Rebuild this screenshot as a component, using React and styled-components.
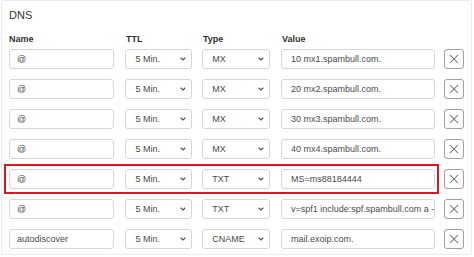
import React from 'react'
import styled, { createGlobalStyle } from 'styled-components'

const Global = createGlobalStyle`
  html, body {
    margin: 0;
    padding: 0;
    background: #fff;
  }
  body {
    font-family: "Liberation Sans", Arial, sans-serif;
  }
`

const Card = styled.div`
  width: 471px;
  height: 255px;
  box-sizing: border-box;
  margin-left: 1px;
  border: 1px solid #ececec;
  border-radius: 2px;
  padding: 8px 7px 0 7px;
`

const Title = styled.div`
  font-size: 11px;
  line-height: 13px;
  color: #333;
`

const Grid = styled.div`
  display: flex;
  flex-direction: column;
  gap: 10px;
  margin-top: 12px;
`

const HeadRow = styled.div`
  display: flex;
  font-size: 9px;
  line-height: 11px;
  font-weight: bold;
  color: #333;
  margin-bottom: -6px;
`

const Head = styled.div`
  width: ${p => p.$w}px;
  margin-right: ${p => p.$gap || 0}px;
`

const Row = styled.div`
  position: relative;
  display: flex;
  height: 20px;

  ${p => p.$highlight && `
    &::before {
      content: '';
      position: absolute;
      left: -5px;
      top: -5px;
      bottom: -5px;
      right: 25px;
      border: 2px solid #e0141c;
      pointer-events: none;
    }
  `}
`

const Field = styled.div`
  box-sizing: border-box;
  width: ${p => p.$w}px;
  margin-right: ${p => p.$gap || 0}px;
  height: 20px;
  border: 1px solid #d6d6d6;
  border-radius: 3px;
  background: #fff;
  display: flex;
  align-items: center;
  justify-content: space-between;
  padding: 0 5px 0 ${p => p.$pad || 9}px;
  font-size: 9px;
  color: #4a4a4a;
  white-space: nowrap;
  overflow: hidden;
`

const DelButton = styled.div`
  box-sizing: border-box;
  width: 20px;
  height: 20px;
  border: 1px solid #a0a0a0;
  border-radius: 3px;
  display: flex;
  align-items: center;
  justify-content: center;
  background: #fff;
`

const Chevron = () => (
  <svg width="6" height="4" viewBox="0 0 6 4">
    <path d="M0.7 0.8 L3 3 L5.3 0.8" fill="none" stroke="#555" strokeWidth="1.2" />
  </svg>
)

const Cross = () => (
  <svg width="10" height="10" viewBox="0 0 10 10">
    <path d="M1 1 L9 9 M9 1 L1 9" fill="none" stroke="#666" strokeWidth="1.05" />
  </svg>
)

const records = [
  { name: '@', type: 'MX', value: '10 mx1.spambull.com.' },
  { name: '@', type: 'MX', value: '20 mx2.spambull.com.' },
  { name: '@', type: 'MX', value: '30 mx3.spambull.com.' },
  { name: '@', type: 'MX', value: '40 mx4.spambull.com.' },
  { name: '@', type: 'TXT', value: 'MS=ms88184444', highlight: true },
  { name: '@', type: 'TXT', value: 'v=spf1 include:spf.spambull.com a -' },
  { name: 'autodiscover', type: 'CNAME', value: 'mail.exoip.com.' },
]

export default function App() {
  return (
    <>
      <Global />
      <Card>
        <Title>DNS</Title>
        <Grid>
          <HeadRow>
            <Head $w={106} $gap={11}>Name</Head>
            <Head $w={67} $gap={10}>TTL</Head>
            <Head $w={68} $gap={11}>Type</Head>
            <Head $w={155}>Value</Head>
          </HeadRow>
          {records.map((r, i) => (
            <Row key={i} $highlight={r.highlight}>
              <Field $w={106} $gap={11} $pad={7}>{r.name}</Field>
              <Field $w={67} $gap={10}>5 Min.<Chevron /></Field>
              <Field $w={68} $gap={11}>{r.type}<Chevron /></Field>
              <Field $w={155} $gap={9}>{r.value}</Field>
              <DelButton><Cross /></DelButton>
            </Row>
          ))}
        </Grid>
      </Card>
    </>
  )
}
